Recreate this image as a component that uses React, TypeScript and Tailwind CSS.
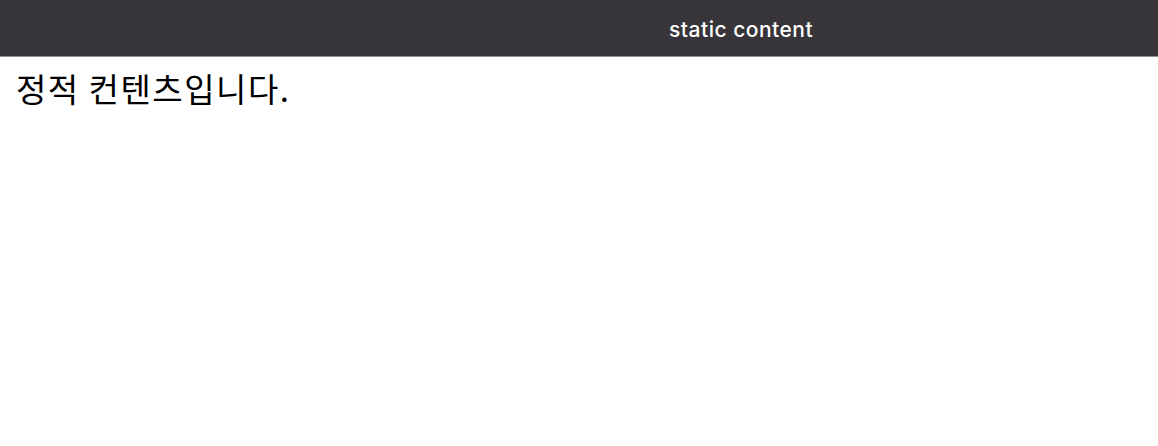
export default function App() {
  return (
    <div className="min-h-screen bg-white">
      <header className="h-[57px] bg-[#37353a] border-b border-[#8e8e8e] flex items-center pl-[669px] pt-[3px]">
        <span className="text-white text-[21px] font-medium tracking-[0.5px] font-['Inter','Liberation_Sans',sans-serif]">
          static content
        </span>
      </header>
      <main className="px-4 pt-[11px]">
        <p className="text-[33px] leading-[40px] tracking-[1.5px] text-black font-['Noto_Sans_CJK_KR',serif]">
          정적 컨텐츠입니다.
        </p>
      </main>
    </div>
  );
}
